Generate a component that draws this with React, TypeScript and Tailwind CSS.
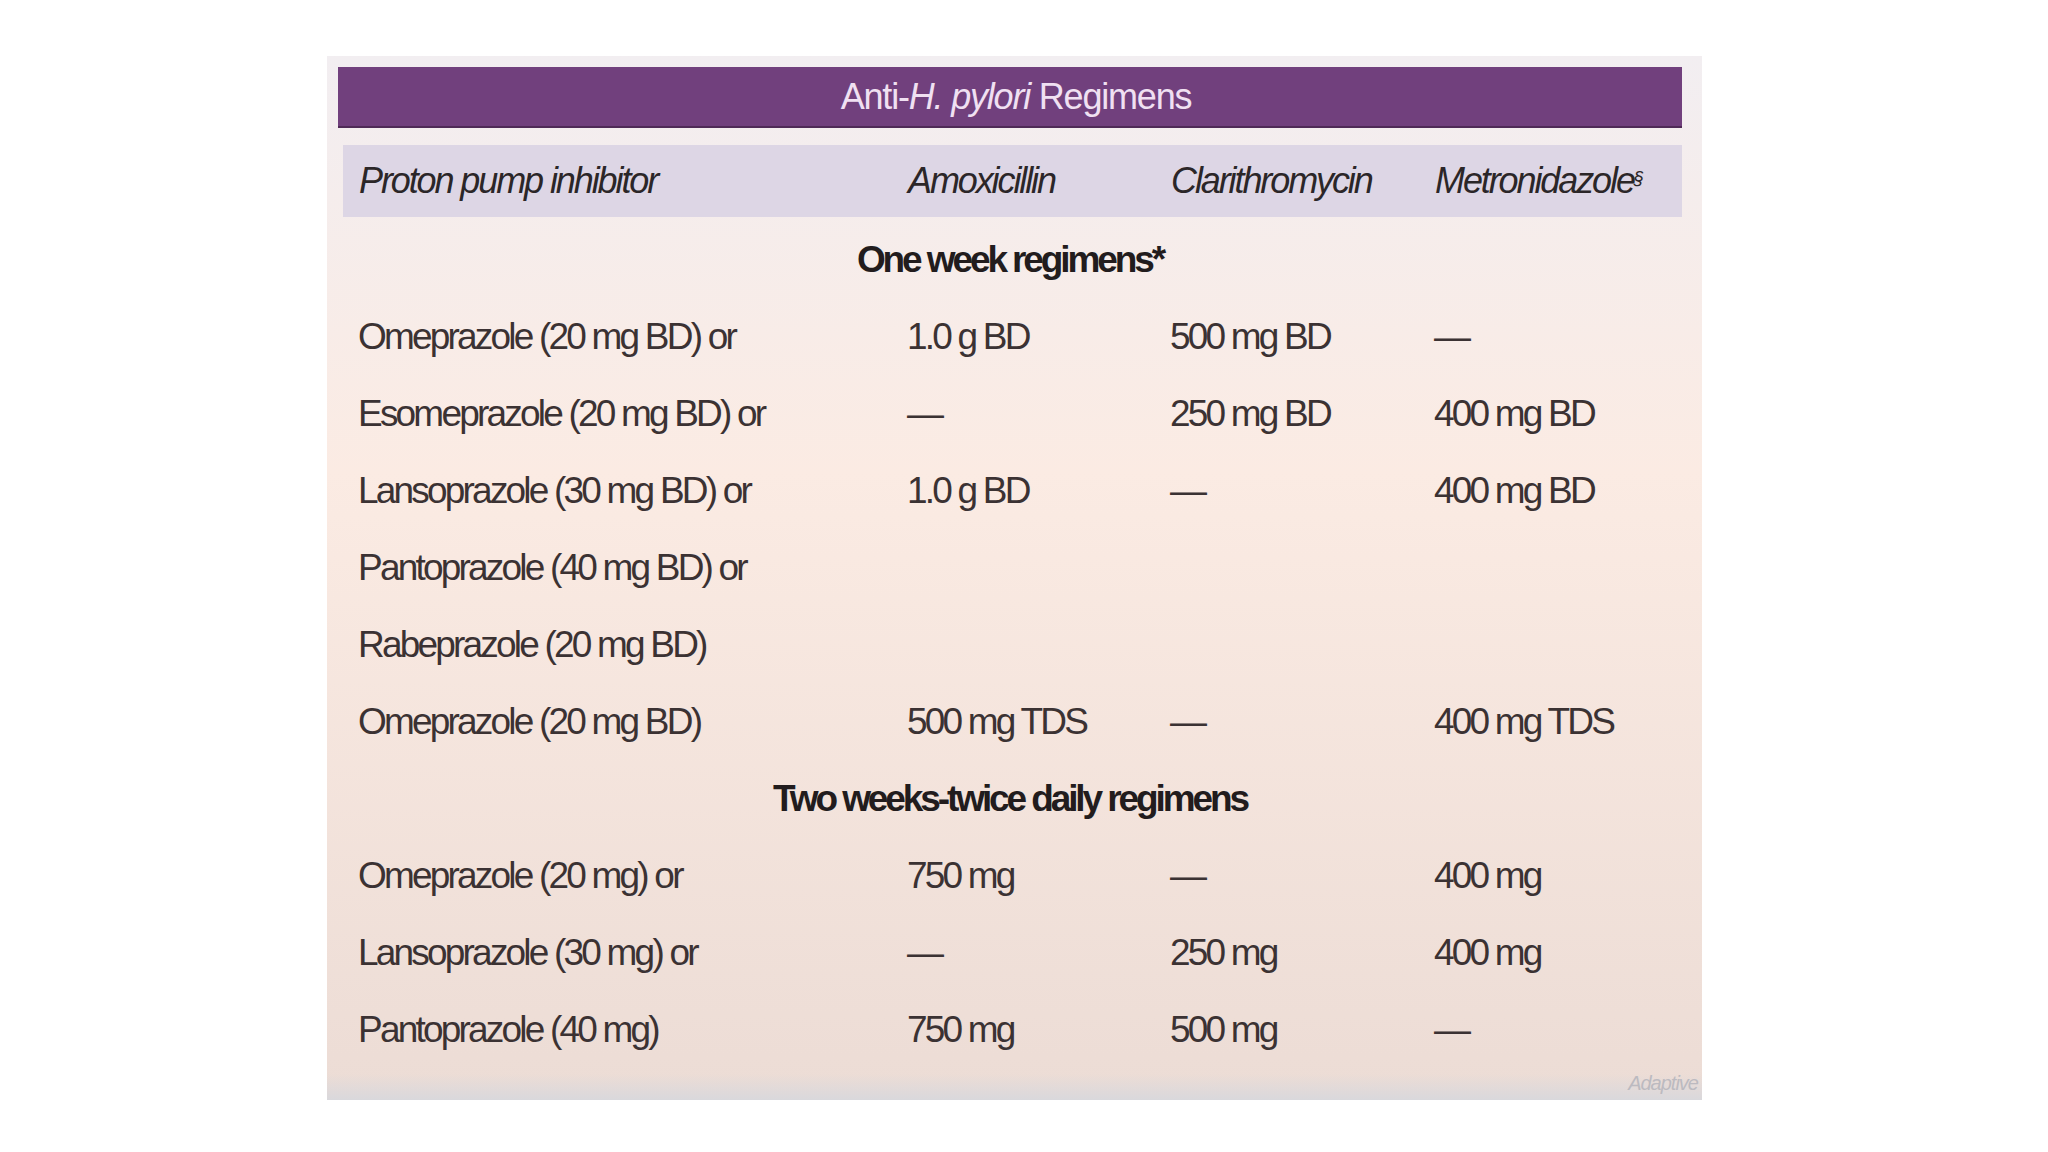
import React from 'react'

type Row =
  | { kind: 'heading'; text: string }
  | { kind: 'drug'; cells: [string, string, string, string] }

const rows: Row[] = [
  { kind: 'heading', text: 'One week regimens*' },
  { kind: 'drug', cells: ['Omeprazole (20 mg BD) or', '1.0 g BD', '500 mg BD', '—'] },
  { kind: 'drug', cells: ['Esomeprazole (20 mg BD) or', '—', '250 mg BD', '400 mg BD'] },
  { kind: 'drug', cells: ['Lansoprazole (30 mg BD) or', '1.0 g BD', '—', '400 mg BD'] },
  { kind: 'drug', cells: ['Pantoprazole (40 mg BD) or', '', '', ''] },
  { kind: 'drug', cells: ['Rabeprazole (20 mg BD)', '', '', ''] },
  { kind: 'drug', cells: ['Omeprazole (20 mg BD)', '500 mg TDS', '—', '400 mg TDS'] },
  { kind: 'heading', text: 'Two weeks-twice daily regimens' },
  { kind: 'drug', cells: ['Omeprazole (20 mg) or', '750 mg', '—', '400 mg'] },
  { kind: 'drug', cells: ['Lansoprazole (30 mg) or', '—', '250 mg', '400 mg'] },
  { kind: 'drug', cells: ['Pantoprazole (40 mg)', '750 mg', '500 mg', '—'] },
]

const cols = 'grid grid-cols-[549px_263px_264px_1fr] items-center'

export default function App() {
  return (
    <div className="min-h-screen w-full bg-white pl-[327px] pt-[56px] font-['Liberation_Sans',sans-serif]">
      <div className="relative flex h-[1044px] w-[1375px] flex-col bg-gradient-to-b from-[#f2eef1] via-[#fbebe3] via-40% to-[#ecdcd5] pl-[11px] pr-[20px] pt-[11px]">
        {/* title bar */}
        <div className="flex h-[61px] items-center justify-center border-b-2 border-[#4f2a57] bg-[#71407d] pl-[12px] text-[36px] tracking-[-1.2px] text-[#f0e0f2]">
          <span>
            Anti-<i>H. pylori</i> Regimens
          </span>
        </div>

        {/* column header */}
        <div className={`${cols} ml-[5px] mt-[17px] h-[72px] bg-[#ddd6e5] pl-[16px] text-[36px] italic tracking-[-2.1px] text-[#2b2628]`}>
          <div>Proton pump inhibitor</div>
          <div>Amoxicillin</div>
          <div>Clarithromycin</div>
          <div>
            Metronidazole<sup className="text-[18px]">§</sup>
          </div>
        </div>

        {/* body */}
        <div className="mt-[4px] flex flex-col text-[37px] tracking-[-2.8px] text-[#3b3233]">
          {rows.map((r, i) =>
            r.kind === 'heading' ? (
              <div key={i} className="flex h-[77px] items-center justify-center text-[37px] font-bold tracking-[-3.1px] text-[#221c1d]">
                {r.text}
              </div>
            ) : (
              <div key={i} className={`${cols} h-[77px] pl-[20px]`}>
                {r.cells.map((c, j) => (
                  <div key={j}>{c}</div>
                ))}
              </div>
            )
          )}
        </div>

        {/* faded bottom strip */}
        <div className="absolute bottom-0 left-0 right-0 h-[26px] bg-gradient-to-b from-transparent to-[#d9d8dc]" />
        <div className="absolute bottom-[2px] right-[4px] text-[20px] italic tracking-[-1px] text-[#bcbac0]">Adaptive</div>
      </div>
    </div>
  )
}
